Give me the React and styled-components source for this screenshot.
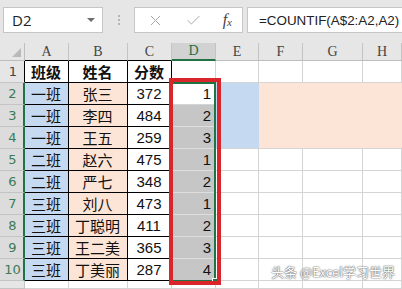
import React from 'react'
import styled, { createGlobalStyle } from 'styled-components'
import { X, Check } from 'lucide-react'

const GRID = '#d4d4d4'
const HEAD_LINE = '#c4c4c4'
const GREEN = '#217346'

const columns = ['A', 'B', 'C', 'D', 'E', 'F', 'G', 'H']

const rows = [
  ['一班', '张三', 372, 1],
  ['一班', '李四', 484, 2],
  ['一班', '王五', 259, 3],
  ['二班', '赵六', 475, 1],
  ['二班', '严七', 348, 2],
  ['三班', '刘八', 473, 1],
  ['三班', '丁聪明', 411, 2],
  ['三班', '王二美', 365, 3],
  ['三班', '丁美丽', 287, 4],
]

const App = () => {
  return (
    <Window>
      <GlobalStyle />
      <FormulaBar>
        <NameBox>
          D2
          <Caret />
        </NameBox>
        <Grip>
          <span /><span /><span />
        </Grip>
        <FxButtons>
          <X size={17} strokeWidth={1.4} />
          <Check size={17} strokeWidth={1.4} />
          <Fx><i>f</i><sub>x</sub></Fx>
        </FxButtons>
        <Formula>=COUNTIF(A$2:A2,A2)</Formula>
      </FormulaBar>

      <Sheet>
        <Corner $r={1} $c={1}><Triangle /></Corner>
        {columns.map((letter, i) => (
          <ColHead
            key={letter}
            $r={1}
            $c={i + 2}
            $active={letter === 'D'}
            $edge={i < 3 ? '#000' : '#bdbdbd'}
          >
            {letter}
          </ColHead>
        ))}

        <RowHead $r={2} $c={1} $edge="#000">1</RowHead>
        <Cell $r={2} $c={2} $bold $edge="#000">班级</Cell>
        <Cell $r={2} $c={3} $bold $edge="#000">姓名</Cell>
        <Cell $r={2} $c={4} $bold $edge="#000">分数</Cell>
        {[5, 6, 7, 8, 9].map((c) => (
          <Cell key={c} $r={2} $c={c} />
        ))}

        {rows.map(([cls, name, score, rank], i) => {
          const r = i + 3
          return (
            <React.Fragment key={r}>
              <RowHead $r={r} $c={1} $active>{i + 2}</RowHead>
              <Cell $r={r} $c={2} $bg="#c5d9f1" $edge="#000">{cls}</Cell>
              <Cell $r={r} $c={3} $bg="#fce4d6" $edge="#000">{name}</Cell>
              <Cell $r={r} $c={4} $edge="#000">{score}</Cell>
              <Cell
                $r={r}
                $c={5}
                $align="flex-end"
                $bg={i === 0 ? '#fff' : '#c6c6c6'}
                $edge={i === 0 ? GRID : '#dedede'}
              >
                {rank}
              </Cell>
              {i > 2 && [6, 7, 8, 9].map((c) => <Cell key={c} $r={r} $c={c} />)}
            </React.Fragment>
          )
        })}

        <Fill $r="3 / 6" $c="6" $bg="#c5d9f1" />
        <Fill $r="3 / 6" $c="7 / 10" $bg="#fce4d6" />

        <RowHead $r={12} $c={1} $edge={HEAD_LINE} />
        {[2, 3, 4, 5, 6, 7, 8, 9].map((c) => (
          <Cell key={c} $r={12} $c={c} />
        ))}

        <Selection>
          <Handle />
        </Selection>
        <Marker />
      </Sheet>

      <Watermark>头条 @Excel学习世界</Watermark>
    </Window>
  )
}

const GlobalStyle = createGlobalStyle`
  * { box-sizing: border-box; }
  body {
    margin: 0;
    background: #e6e6e6;
    font-family: "Liberation Sans", "Noto Sans CJK SC", sans-serif;
  }
`

const Window = styled.div`
  position: relative;
  width: 402px;
  height: 289px;
  overflow: hidden;
  background: #e6e6e6;
`

const FormulaBar = styled.div`
  display: flex;
  align-items: flex-start;
  height: 43px;
  padding: 7px 0 0 3px;
`

const Box = styled.div`
  height: 26px;
  background: #fff;
  border: 1px solid #c6c6c6;
  display: flex;
  align-items: center;
`

const NameBox = styled(Box)`
  width: 100px;
  padding: 0 0 0 8px;
  font-family: "Open Sans", sans-serif;
  font-size: 15px;
  color: #222;
  justify-content: space-between;
`

const Caret = styled.span`
  width: 0;
  height: 0;
  margin-right: 7px;
  border-left: 4px solid transparent;
  border-right: 4px solid transparent;
  border-top: 4px solid #6e6e6e;
`

const Grip = styled.div`
  width: 31px;
  height: 26px;
  display: flex;
  flex-direction: column;
  align-items: center;
  justify-content: center;
  gap: 2px;

  span {
    width: 2px;
    height: 2px;
    background: #b4b4b4;
  }
`

const FxButtons = styled(Box)`
  width: 109px;
  padding: 0 6px 0 12px;
  justify-content: space-between;
  color: #a8a8a8;
`

const Fx = styled.span`
  font-family: "Liberation Serif", serif;
  font-size: 16px;
  color: #444;
  margin-right: 4px;

  sub {
    font-size: 11px;
    font-style: italic;
    vertical-align: -1px;
  }
`

const Formula = styled(Box)`
  flex: 1;
  margin-left: 4px;
  border-right: none;
  padding-left: 11px;
  font-family: "Liberation Sans", sans-serif;
  font-size: 13.4px;
  color: #222;
  white-space: nowrap;
`

const Sheet = styled.div`
  display: grid;
  grid-template-columns: 25px 44px 59px 44px 44px 43px 44px 60px 1fr;
  grid-template-rows: 18px repeat(10, 22px) 1fr;
  height: 246px;
  background: #fff;
`

const placed = `
  grid-row: var(--r);
  grid-column: var(--c);
`

const Corner = styled.div.attrs((p) => ({ style: { '--r': p.$r, '--c': p.$c } }))`
  ${placed}
  background: #e6e6e6;
  border-right: 1px solid #bdbdbd;
  border-bottom: 1px solid #bdbdbd;
  display: flex;
  align-items: flex-end;
  justify-content: flex-end;
  padding: 0 3px 3px 0;
`

const Triangle = styled.span`
  width: 0;
  height: 0;
  border-left: 9px solid transparent;
  border-bottom: 9px solid #b9b9b9;
`

const ColHead = styled.div.attrs((p) => ({ style: { '--r': p.$r, '--c': p.$c } }))`
  ${placed}
  display: flex;
  align-items: center;
  justify-content: center;
  background: ${(p) => (p.$active ? '#d2d2d2' : '#e6e6e6')};
  color: ${(p) => (p.$active ? GREEN : '#444')};
  border-right: 1px solid ${HEAD_LINE};
  border-bottom: ${(p) => (p.$active ? `2px solid ${GREEN}` : `1px solid ${p.$edge}`)};
  font-family: "Liberation Serif", serif;
  font-size: 14px;
`

const RowHead = styled.div.attrs((p) => ({ style: { '--r': p.$r, '--c': p.$c } }))`
  ${placed}
  display: flex;
  align-items: center;
  justify-content: center;
  background: ${(p) => (p.$active ? '#dcdcdc' : '#e6e6e6')};
  color: ${(p) => (p.$active ? '#3b7a57' : '#444')};
  border-bottom: 1px solid ${HEAD_LINE};
  border-right: ${(p) => (p.$active ? `2px solid ${GREEN}` : `1px solid ${p.$edge}`)};
  font-family: "DejaVu Sans", sans-serif;
  font-size: 13px;
  padding-left: 2px;
`

const Cell = styled.div.attrs((p) => ({ style: { '--r': p.$r, '--c': p.$c } }))`
  ${placed}
  display: flex;
  align-items: center;
  justify-content: ${(p) => p.$align || 'center'};
  padding: 0 4px 0 3px;
  background: ${(p) => p.$bg || '#fff'};
  border-right: 1px solid ${(p) => p.$edge || GRID};
  border-bottom: 1px solid ${(p) => p.$edge || GRID};
  font-size: 15px;
  font-weight: ${(p) => (p.$bold ? 700 : 400)};
  color: #111;
  white-space: nowrap;
`

const Fill = styled.div.attrs((p) => ({ style: { '--r': p.$r, '--c': p.$c } }))`
  ${placed}
  background: ${(p) => p.$bg};
  border-bottom: 1px solid ${GRID};
`

const Selection = styled.div`
  grid-row: 3 / 12;
  grid-column: 5;
  position: relative;
  z-index: 1;
  margin: -1px 0 -1px -1px;
  border: 2px solid ${GREEN};
`

const Handle = styled.span`
  position: absolute;
  right: -4px;
  bottom: -4px;
  width: 6px;
  height: 6px;
  background: ${GREEN};
  border: 1px solid #fff;
`

const Marker = styled.div`
  grid-row: 3 / 12;
  grid-column: 5;
  position: relative;
  z-index: 2;
  margin: -5px -5px -4px -3px;
  border: 4px solid #d8262b;
`

const Watermark = styled.div`
  position: absolute;
  right: 7px;
  bottom: 8px;
  font-family: "Noto Sans CJK SC", sans-serif;
  font-size: 13px;
  color: #fff;
  text-shadow: 0 0 1px #444, 0 0 2px rgba(0, 0, 0, 0.6);
  z-index: 3;
`

export default App
